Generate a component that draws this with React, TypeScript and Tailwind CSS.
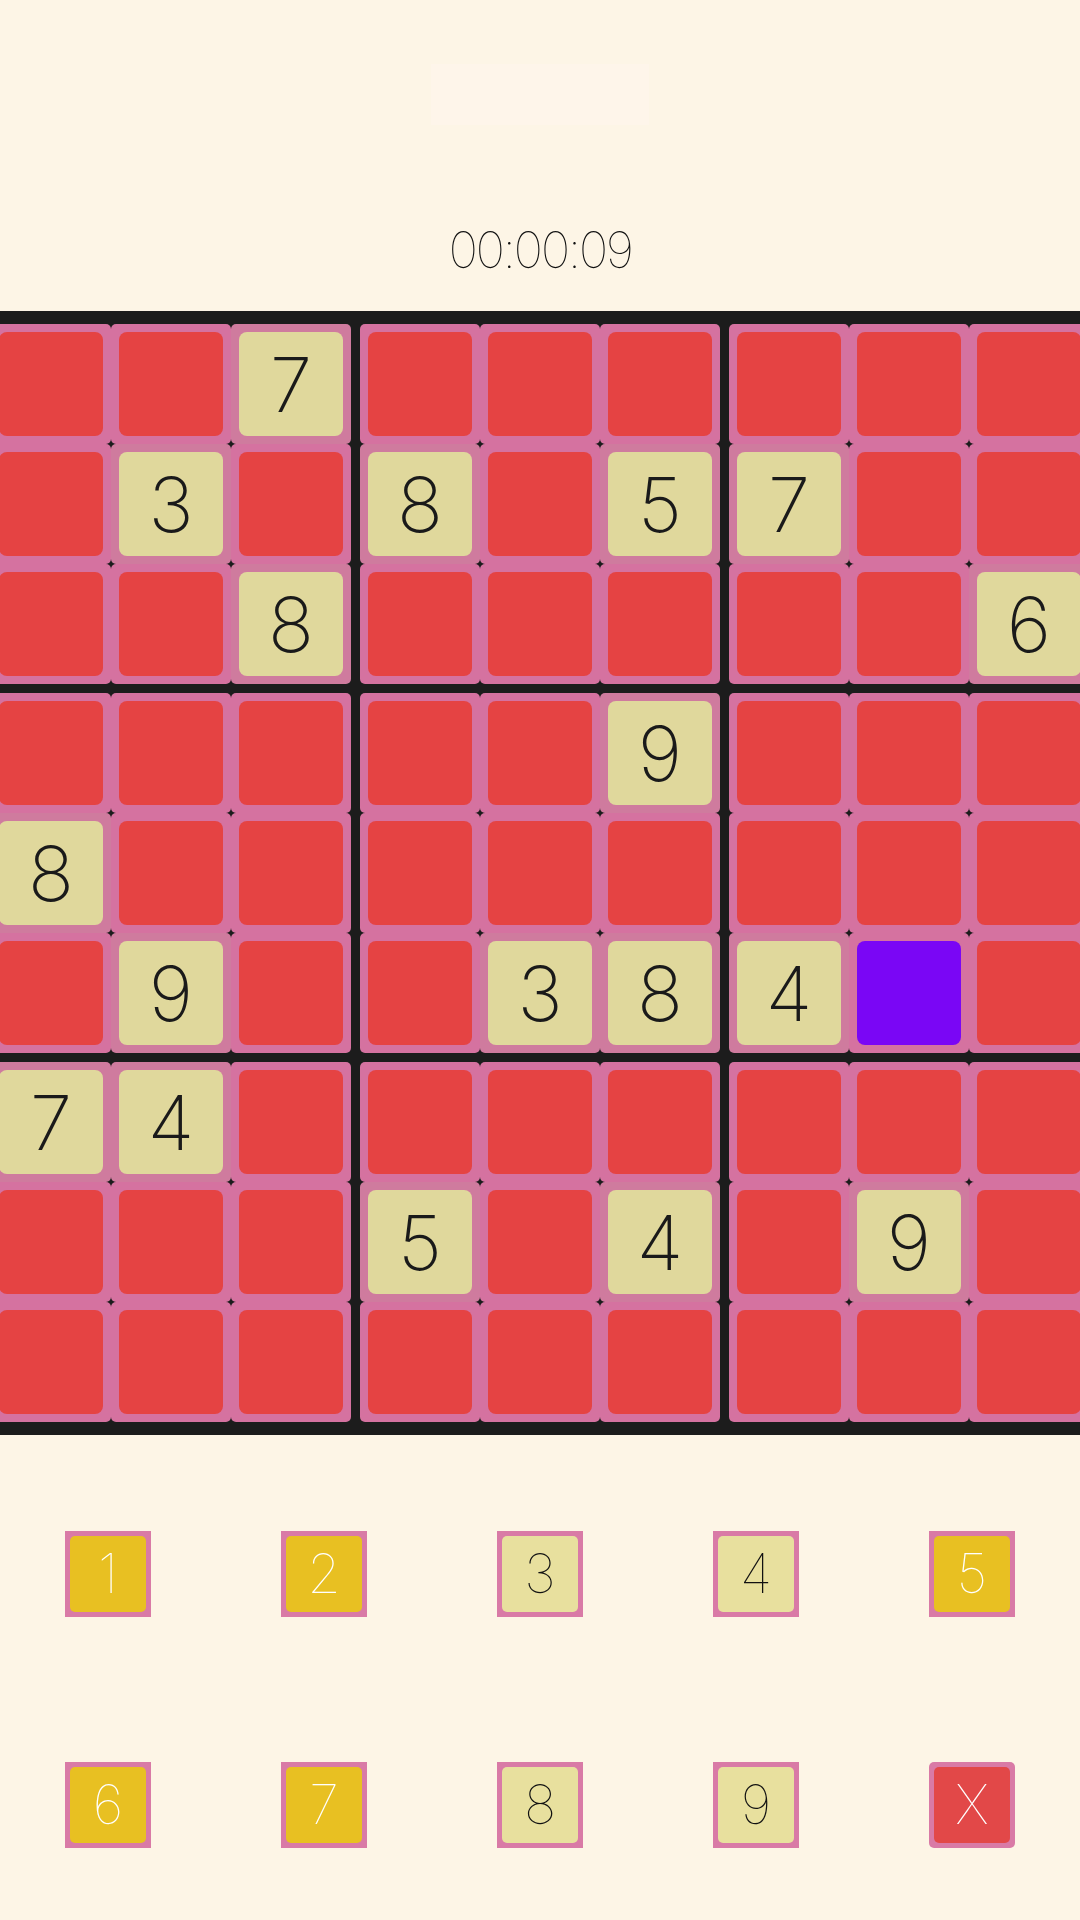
import React from 'react'

type Board = number[][]

const BOARD: Board = [
	[0, 0, 7, 0, 0, 0, 0, 0, 0],
	[0, 3, 0, 8, 0, 5, 7, 0, 0],
	[0, 0, 8, 0, 0, 0, 0, 0, 6],
	[0, 0, 0, 0, 0, 9, 0, 0, 0],
	[8, 0, 0, 0, 0, 0, 0, 0, 0],
	[0, 9, 0, 0, 3, 8, 4, 0, 0],
	[7, 4, 0, 0, 0, 0, 0, 0, 0],
	[0, 0, 0, 5, 0, 4, 0, 9, 0],
	[0, 0, 0, 0, 0, 0, 0, 0, 0],
]

const SELECTED = { row: 5, col: 7 }

// digits that are used up show in the darker yellow
const KEYS: { label: string; kind: 'done' | 'open' | 'clear' }[] = [
	{ label: '1', kind: 'done' },
	{ label: '2', kind: 'done' },
	{ label: '3', kind: 'open' },
	{ label: '4', kind: 'open' },
	{ label: '5', kind: 'done' },
	{ label: '6', kind: 'done' },
	{ label: '7', kind: 'done' },
	{ label: '8', kind: 'open' },
	{ label: '9', kind: 'open' },
	{ label: 'X', kind: 'clear' },
]

interface CellProps {
	value: number
	selected: boolean
}

const Cell = ({ value, selected }: CellProps) => {
	const given = value > 0
	let inner = 'bg-[#e54343]'
	if (given) inner = 'bg-[#e0d89c]'
	if (selected) inner = 'bg-[#7a06f5]'

	return (
		<div
			className={`w-[120px] h-[120px] p-2 rounded-[5px] ${
				given ? 'bg-[#cf7b9e]' : 'bg-[#d572a0]'
			}`}
		>
			<div
				className={`w-full h-full rounded-lg flex items-center justify-center text-[76px] leading-none font-extralight text-[#1a1a1a] ${inner}`}
			>
				{given ? value : ''}
			</div>
		</div>
	)
}

const Box = ({ boxRow, boxCol }: { boxRow: number; boxCol: number }) => {
	const cells = []
	for (let r = 0; r < 3; r++) {
		for (let c = 0; c < 3; c++) {
			const row = boxRow * 3 + r
			const col = boxCol * 3 + c
			cells.push(
				<Cell
					key={`${row}-${col}`}
					value={BOARD[row][col]}
					selected={row === SELECTED.row && col === SELECTED.col}
				/>
			)
		}
	}
	return <div className="grid grid-cols-3 w-[360px] shrink-0">{cells}</div>
}

const Grid = () => (
	<div className="bg-[#1c1c1c] py-[13px] flex flex-col gap-[9px] overflow-hidden">
		{[0, 1, 2].map((br) => (
			<div key={br} className="flex justify-center gap-[9px]">
				{[0, 1, 2].map((bc) => (
					<Box key={bc} boxRow={br} boxCol={bc} />
				))}
			</div>
		))}
	</div>
)

const KeyButton = ({ label, kind }: { label: string; kind: 'done' | 'open' | 'clear' }) => {
	const inner =
		kind === 'done'
			? 'bg-[#e8c022] text-white'
			: kind === 'open'
				? 'bg-[#e8e09e] text-[#111111]'
				: 'bg-[#e24848] text-white'
	return (
		<button
			className={`w-[86px] h-[86px] p-[5px] bg-[#d97aa6] ${kind === 'clear' ? 'rounded-[5px]' : ''}`}
		>
			<div
				className={`w-full h-full rounded-[5px] flex items-center justify-center text-[54px] leading-none font-thin ${inner}`}
			>
				{label}
			</div>
		</button>
	)
}

const Keypad = () => (
	<div className="pt-[96px] flex flex-col gap-[145px]">
		{[KEYS.slice(0, 5), KEYS.slice(5)].map((row, i) => (
			<div key={i} className="grid grid-cols-5">
				{row.map((k) => (
					<div key={k.label} className="flex justify-center">
						<KeyButton label={k.label} kind={k.kind} />
					</div>
				))}
			</div>
		))}
	</div>
)

const App = () => {
	return (
		<div className="w-full h-[1920px] overflow-hidden bg-[#fdf5e6] font-[Inter,'Noto_Sans',sans-serif]">
			<div className="h-[311px] flex flex-col items-center">
				<div className="mt-[64px] w-[218px] h-[61px] bg-[#fef5ea]" />
				<div className="mt-[105px] text-[50px] leading-[40px] font-thin tracking-[-0.05em] text-[#111111]">
					00:00:09
				</div>
			</div>
			<Grid />
			<Keypad />
		</div>
	)
}

export default App
